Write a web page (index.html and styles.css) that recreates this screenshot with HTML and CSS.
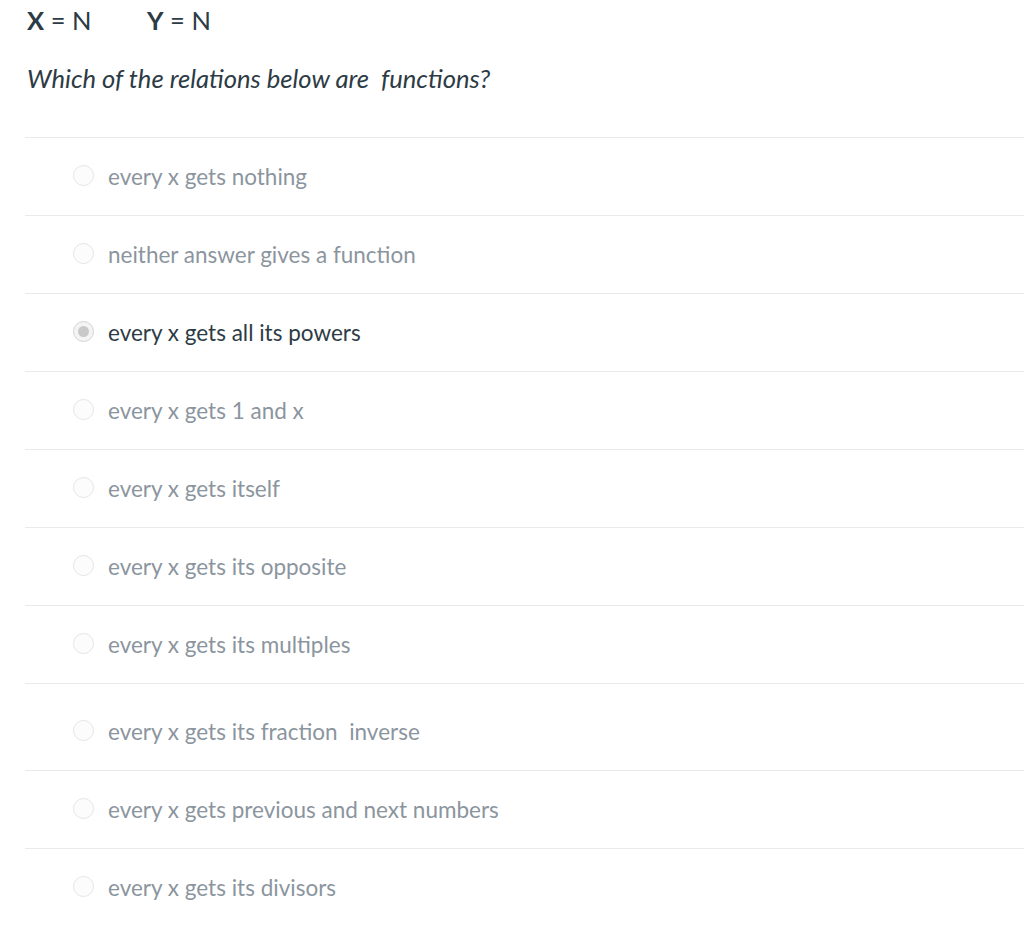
FILE: index.html
```html
<!DOCTYPE html>
<html>
<head>
<meta charset="utf-8">
<link rel="stylesheet" href="styles.css">
</head>
<body>
<div class="page">
  <div class="sets"><span class="set"><b>X</b> = N</span><span class="set"><b>Y</b> = N</span></div>
  <p class="question">Which of the relations below are &nbsp;functions?</p>
  <div class="answers">
    <div class="answer"><span class="radio"></span><span class="label">every x gets nothing</span></div>
    <div class="answer"><span class="radio"></span><span class="label">neither answer gives a function</span></div>
    <div class="answer selected"><span class="radio"></span><span class="label">every x gets all its powers</span></div>
    <div class="answer"><span class="radio"></span><span class="label">every x gets 1 and x</span></div>
    <div class="answer"><span class="radio"></span><span class="label">every x gets itself</span></div>
    <div class="answer"><span class="radio"></span><span class="label">every x gets its opposite</span></div>
    <div class="answer"><span class="radio"></span><span class="label">every x gets its multiples</span></div>
    <div class="answer tall"><span class="radio"></span><span class="label">every x gets its fraction &nbsp;inverse</span></div>
    <div class="answer"><span class="radio"></span><span class="label">every x gets previous and next numbers</span></div>
    <div class="answer"><span class="radio"></span><span class="label">every x gets its divisors</span></div>
  </div>
</div>
</body>
</html>
```
FILE: styles.css
```css
html, body {
  margin: 0;
  padding: 0;
  background: #ffffff;
}
body {
  font-family: Lato, "Noto Sans", sans-serif;
  color: #2d3b45;
}
.page {
  padding-left: 25px;
}
.sets {
  display: flex;
  padding-left: 2px;
  padding-top: 4px;
  height: 32px;
  font-size: 25.5px;
  line-height: 32px;
}
.set {
  width: 120px;
}
.set b {
  font-weight: 700;
}
.question {
  margin: 26px 0 0 2px;
  font-style: italic;
  font-size: 25.6px;
  line-height: 32px;
}
.answers {
  margin-top: 43px;
  border-top: 1px solid #e8eaec;
}
.answer {
  display: flex;
  align-items: center;
  height: 77px;
  border-bottom: 1px solid #e8eaec;
  padding-left: 48px;
}
.answer.tall {
  height: 77px;
  padding-top: 9px;
}
.answer:last-child {
  border-bottom: none;
}
.radio {
  width: 21px;
  height: 21px;
  border: 1px solid #e3e5e7;
  border-radius: 50%;
  background: #fcfcfc;
  margin-right: 14px;
  margin-top: -3px;
  box-sizing: border-box;
  flex: none;
  position: relative;
}
.selected .radio {
  border-color: #d4d4d4;
  background: #f4f4f4;
}
.selected .radio::after {
  content: "";
  position: absolute;
  left: 4px;
  top: 4px;
  width: 11px;
  height: 11px;
  border-radius: 50%;
  background: #c9c9c9;
}
.label {
  font-size: 22.5px;
  line-height: 28px;
  color: #8b959e;
}
.selected .label {
  color: #2d3b45;
}
```
